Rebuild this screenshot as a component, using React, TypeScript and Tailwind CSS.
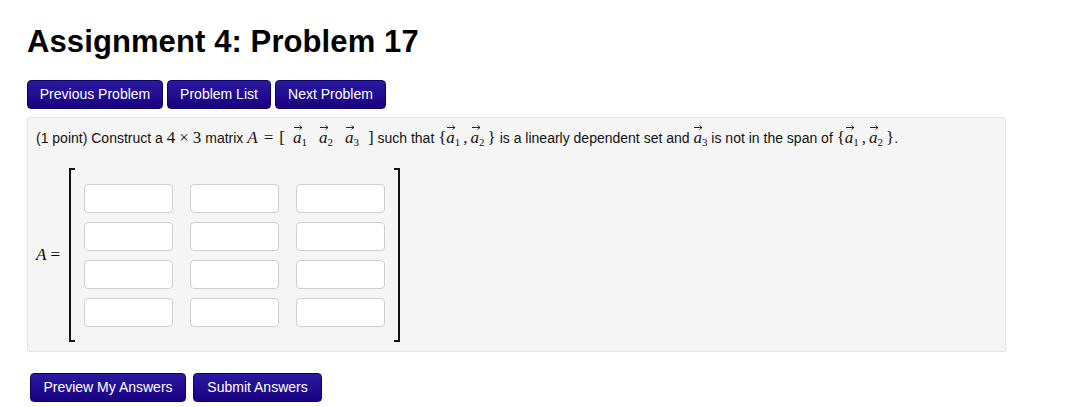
import React from 'react';

const Arrow = () => (
    <svg className="absolute left-[1px] top-[-3px]" width="9" height="5" viewBox="0 0 9 5" fill="none">
        <path d="M0 2.5H8M5.5 0.5L8 2.5L5.5 4.5" stroke="#111" strokeWidth="0.9" />
    </svg>
);

const Vec: React.FC<{ sub: string }> = ({ sub }) => (
    <span className="relative inline-block italic">
        <Arrow />
        a<span className="text-[11px] not-italic relative top-[3px]">{sub}</span>
    </span>
);

const NavButton: React.FC<{ label: string; w: string }> = ({ label, w }) => (
    <button
        className={`${w} h-[29px] rounded-[4px] border border-[#0d0060] bg-gradient-to-b from-[#2a1aa0] to-[#1a0080] text-white text-[14px]`}
    >
        {label}
    </button>
);

const Bracket: React.FC<{ side: 'l' | 'r' }> = ({ side }) => (
    <div
        className={
            side === 'l'
                ? 'w-[6px] h-[174px] border-l-2 border-y-2 border-[#111]'
                : 'w-[6px] h-[174px] border-r-2 border-y-2 border-[#111]'
        }
    />
);

const M: React.FC<{ children: React.ReactNode }> = ({ children }) => (
    <span className="font-['Liberation_Serif',serif] text-[17px]">{children}</span>
);

export default function App() {
    const rows = [0, 1, 2, 3];
    const cols = [0, 1, 2];
    return (
        <div className="min-h-[407px] bg-white font-['Liberation_Sans',Arial,sans-serif] text-black">
            <div className="px-[27px] pt-[23px]">
                <h1 className="text-[31px] font-bold leading-[38px] tracking-[0.1px]">Assignment 4: Problem 17</h1>

                <div className="flex gap-[4px] mt-[19px]">
                    <NavButton label="Previous Problem" w="w-[136px]" />
                    <NavButton label="Problem List" w="w-[104px]" />
                    <NavButton label="Next Problem" w="w-[111px]" />
                </div>

                <div className="mt-[8px] w-[979px] h-[235px] bg-[#f5f5f5] border border-[#e3e3e3] rounded-[3px] px-[8px] pt-[10px]">
                    <p className="text-[14px] leading-[20px] text-[#111]">
                        (1 point) Construct a{' '}
                        <M>
                            4<span className="mx-[4px]">&times;</span>3
                        </M>{' '}
                        matrix{' '}
                        <M>
                            <span className="italic">A</span>
                            <span className="mx-[6px]">=</span>[<span className="ml-[8px]" />
                            <Vec sub="1" />
                            <span className="ml-[12px]" />
                            <Vec sub="2" />
                            <span className="ml-[12px]" />
                            <Vec sub="3" />
                            <span className="ml-[9px]" />]
                        </M>{' '}
                        such that{' '}
                        <M>
                            {'{'}
                            <Vec sub="1" />
                            <span className="mx-[3px]">,</span>
                            <Vec sub="2" />
                            <span className="ml-[3px]" />
                            {'}'}
                        </M>{' '}
                        is a linearly dependent set and{' '}
                        <M>
                            <Vec sub="3" />
                        </M>{' '}
                        is not in the span of{' '}
                        <M>
                            {'{'}
                            <Vec sub="1" />
                            <span className="mx-[3px]">,</span>
                            <Vec sub="2" />
                            <span className="ml-[3px]" />
                            {'}'}
                        </M>
                        .
                    </p>

                    <div className="flex items-center mt-[19px]">
                        <span className="w-[33px] font-['Liberation_Serif',serif] text-[17px]">
                            <span className="italic">A</span>
                            <span className="ml-[4px]">=</span>
                        </span>
                        <Bracket side="l" />
                        <div className="flex flex-col gap-[9px] px-[9px]">
                            {rows.map(r => (
                                <div key={r} className="flex gap-[17px]">
                                    {cols.map(c => (
                                        <input
                                            key={c}
                                            className="w-[89px] h-[29px] bg-white border border-[#cfcfcf] rounded-[4px]"
                                        />
                                    ))}
                                </div>
                            ))}
                        </div>
                        <Bracket side="r" />
                    </div>
                </div>

                <div className="flex gap-[7px] mt-[21px] ml-[3px]">
                    <NavButton label="Preview My Answers" w="w-[156px]" />
                    <NavButton label="Submit Answers" w="w-[129px]" />
                </div>
            </div>
        </div>
    );
}
